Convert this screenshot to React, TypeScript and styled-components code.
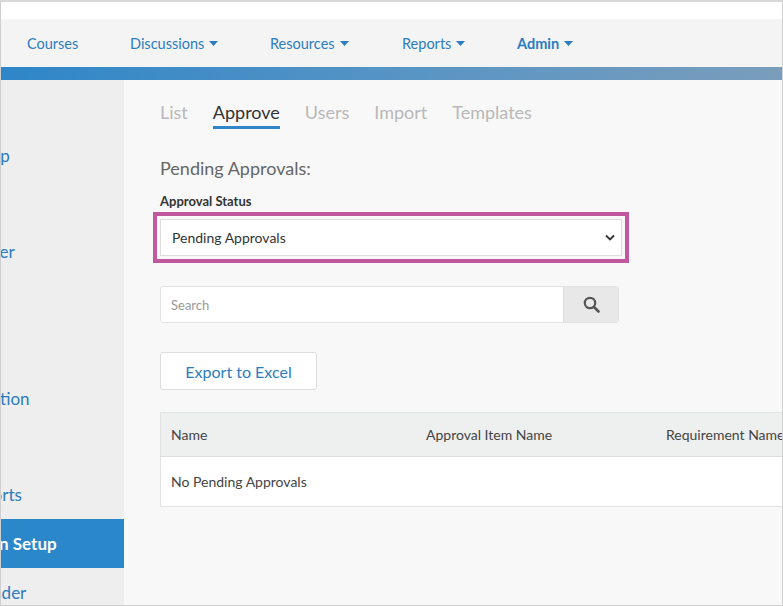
import React from "react";
import styled, { createGlobalStyle } from "styled-components";

const G = createGlobalStyle`
  html, body { margin: 0; padding: 0; }
  body { font-family: Lato, "Open Sans", sans-serif; background: #fff; }
`;
const Frame = styled.div`
  width: 783px; height: 606px; box-sizing: border-box; overflow: hidden;
  border: 1px solid #cfcfcf; border-top: 2px solid #d8d8d8;
  display: flex; flex-direction: column; background: #fff;
`;
const TopWhite = styled.div` height: 17px; flex: none; `;
const Nav = styled.nav`
  height: 48px; flex: none; background: #f4f4f4; display: flex; align-items: center;
  padding-left: 26px; font-size: 14.5px;
`;
const NavItem = styled.a<{ $bold?: boolean; $w: number }>`
  color: #2b7cc0; font-weight: ${p => (p.$bold ? 700 : 400)}; width: ${p => p.$w}px;
  display: flex; align-items: center; gap: 5px; text-decoration: none;
`;
const Caret = () => (
  <svg width="9" height="5" viewBox="0 0 9 5"><path d="M0 0h9L4.5 5z" fill="#2b7cc0" /></svg>
);
const Bar = styled.div`
  height: 13px; flex: none; background: linear-gradient(90deg, #2e86c8, #5a95c4 55%, #7a9dbb);
`;
const Body = styled.div` flex: 1; display: flex; min-height: 0; `;
const Side = styled.aside`
  width: 123px; flex: none; background: #eeeeee; display: flex; flex-direction: column; overflow: hidden;
`;
const SideItem = styled.div<{ $top: number; $shift: number; $active?: boolean }>`
  margin-top: ${p => p.$top}px; height: ${p => (p.$active ? 49 : 24)}px; display: flex; align-items: center;
  white-space: nowrap; font-size: 17px; color: ${p => (p.$active ? "#fff" : "#2b7cc0")};
  font-weight: ${p => (p.$active ? 700 : 400)};
  background: ${p => (p.$active ? "#2a87c9" : "transparent")};
  text-indent: ${p => p.$shift}px; flex: none;
`;
const Main = styled.main`
  flex: 1; background: #f8f8f8; padding: 0 0 0 36px; display: flex; flex-direction: column; min-width: 0;
`;
const Tabs = styled.div` display: flex; gap: 25px; margin-top: 21px; `;
const Tab = styled.span<{ $active?: boolean }>`
  font-size: 18px; color: ${p => (p.$active ? "#333" : "#b8b8b8")}; padding-bottom: 3px;
  border-bottom: 3px solid ${p => (p.$active ? "#2e86c8" : "transparent")};
`;
const H = styled.div` font-size: 18px; color: #666; margin-top: 28px; `;
const Label = styled.div` font-size: 13px; font-weight: 700; color: #333; margin-top: 14px; `;
const Highlight = styled.div`
  margin: 3px 0 0 -7px; width: 476px; height: 51px; box-sizing: border-box;
  border: 4px solid #c0579f; padding: 3px;
`;
const Select = styled.div`
  height: 100%; background: #fff; border: 1px solid #ddd; box-sizing: border-box;
  display: flex; align-items: center; justify-content: space-between; padding: 0 6px 0 11px;
  font-size: 14px; color: #333;
`;
const SearchRow = styled.div`
  margin-top: 23px; width: 459px; height: 37px; display: flex; border: 1px solid #e2e2e2;
  border-radius: 3px; overflow: hidden; box-sizing: border-box;
`;
const SearchInput = styled.div`
  flex: 1; background: #fff; display: flex; align-items: center; padding-left: 10px;
  font-size: 13px; color: #999;
`;
const SearchBtn = styled.div`
  width: 54px; background: #e8e8e8; border-left: 1px solid #ddd; display: flex; align-items: center; justify-content: center;
`;
const Export = styled.button`
  margin-top: 29px; align-self: flex-start; width: 157px; height: 38px; background: #fff;
  border: 1px solid #ddd; border-radius: 3px; color: #2b7cc0; font-family: inherit; font-size: 16px;
`;
const Table = styled.div` margin-top: 22px; border: 1px solid #e2e2e2; border-right: none; `;
const Head = styled.div`
  height: 43px; background: #eeefef; border-bottom: 1px solid #ddd; display: grid;
  grid-template-columns: 255px 240px 1fr; align-items: center; font-size: 14px; color: #444;
  & > span { padding-left: 10px; white-space: nowrap; }
`;
const Row = styled.div`
  height: 49px; background: #fff; display: flex; align-items: center; padding-left: 10px; font-size: 14px; color: #444;
`;

export default function App() {
  return (
    <Frame>
      <G />
      <TopWhite />
      <Nav>
        <NavItem $w={103}>Courses</NavItem>
        <NavItem $w={140}>Discussions <Caret /></NavItem>
        <NavItem $w={132}>Resources <Caret /></NavItem>
        <NavItem $w={115}>Reports <Caret /></NavItem>
        <NavItem $w={80} $bold>Admin <Caret /></NavItem>
      </Nav>
      <Bar />
      <Body>
        <Side>
          <SideItem $top={63} $shift={-38}>Group</SideItem>
          <SideItem $top={72} $shift={-52}>Manager</SideItem>
          <SideItem $top={123} $shift={-64}>Certification</SideItem>
          <SideItem $top={72} $shift={-37}>Reports</SideItem>
          <SideItem $top={13} $shift={-87} $active>Certification Setup</SideItem>
          <SideItem $top={12} $shift={-46}>Reminder</SideItem>
        </Side>
        <Main>
          <Tabs>
            <Tab>List</Tab>
            <Tab $active>Approve</Tab>
            <Tab>Users</Tab>
            <Tab>Import</Tab>
            <Tab>Templates</Tab>
          </Tabs>
          <H>Pending Approvals:</H>
          <Label>Approval Status</Label>
          <Highlight>
            <Select>
              Pending Approvals
              <svg width="10" height="7" viewBox="0 0 10 7"><path d="M1 1.5l4 4 4-4" stroke="#333" strokeWidth="1.8" fill="none" /></svg>
            </Select>
          </Highlight>
          <SearchRow>
            <SearchInput>Search</SearchInput>
            <SearchBtn>
              <svg width="17" height="17" viewBox="0 0 17 17"><circle cx="7" cy="7" r="5.2" stroke="#555" strokeWidth="2.2" fill="none" /><path d="M11 11l4.5 4.5" stroke="#555" strokeWidth="2.6" strokeLinecap="round" /></svg>
            </SearchBtn>
          </SearchRow>
          <Export>Export to Excel</Export>
          <Table>
            <Head><span>Name</span><span>Approval Item Name</span><span>Requirement Name</span></Head>
            <Row>No Pending Approvals</Row>
          </Table>
        </Main>
      </Body>
    </Frame>
  );
}
